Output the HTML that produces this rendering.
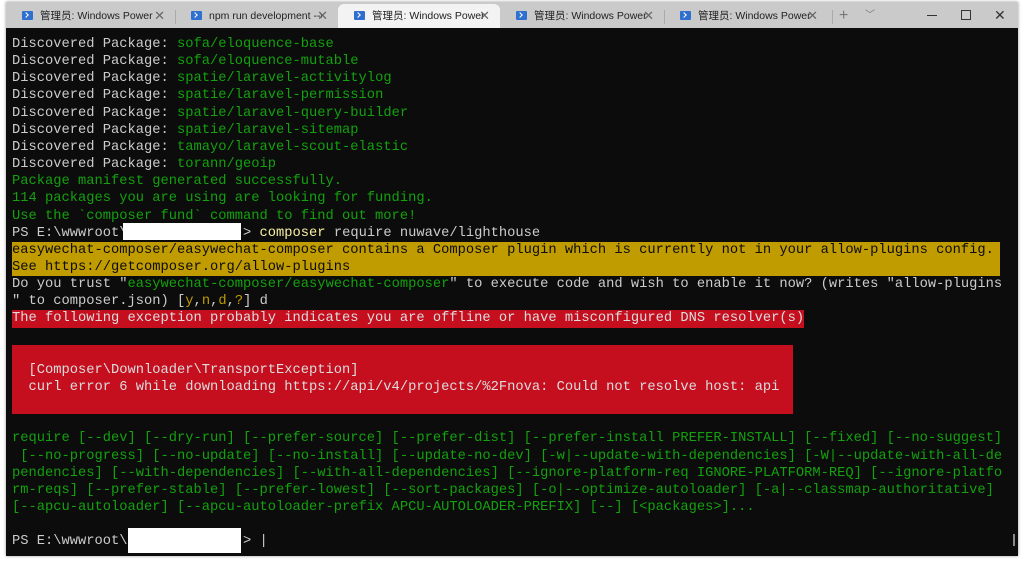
<!DOCTYPE html>
<html><head><meta charset="utf-8"><style>
body{margin:0;width:1024px;height:562px;background:#fff;overflow:hidden;position:relative;font-family:"Liberation Sans","Noto Sans CJK SC",sans-serif}
#win{position:absolute;left:6px;top:2px;width:1012px;height:554px;background:#0c0c0c;box-shadow:0 0 3px rgba(0,0,0,.4)}
#bar{position:absolute;left:0;top:0;width:1012px;height:26px;background:#cacaca}
.tab{position:absolute;top:2px;height:24px;font-size:10.5px;color:#222;line-height:24px}
.tab .ic{position:absolute;left:16px;top:7px;width:11px;height:9px;background:#2f6fcf;border-radius:1px}
.tab .ic:after{content:"";position:absolute;left:2px;top:2px;width:3px;height:3px;border-right:1.3px solid #fff;border-bottom:1.3px solid #fff;transform:rotate(-45deg)}
.tab .t{position:absolute;left:34px;width:113px;overflow:hidden;white-space:nowrap}
.tab .x{position:absolute;right:10px;color:#666;font-size:13px}
.act{background:#f3f3f3;border-radius:6px 6px 0 0}
.sep{position:absolute;top:8px;width:1px;height:14px;background:#aaa}
.term{position:absolute;left:6px;top:34px;font-family:"Liberation Mono",monospace;font-size:13.75px;color:#cccccc;white-space:pre}
.l{position:absolute;left:0;height:17.15px;line-height:17.15px}
.g{color:#13a10e}.y{color:#c19c00}.yl{color:#f9f1a5}
</style></head><body>
<div id="win">
<div id="bar">
 <div class="tab" style="left:0;width:169px"><div class="ic"></div><span class="t">管理员: Windows PowerShell</span><span class="x">✕</span></div>
 <div class="sep" style="left:169px"></div>
 <div class="tab" style="left:169px;width:163px"><div class="ic"></div><span class="t">npm run development --watch</span><span class="x">✕</span></div>
 <div class="tab act" style="left:332px;width:162px"><div class="ic"></div><span class="t">管理员: Windows PowerShell</span><span class="x">✕</span></div>
 <div class="tab" style="left:494px;width:164px"><div class="ic"></div><span class="t">管理员: Windows PowerShell</span><span class="x">✕</span></div>
 <div class="sep" style="left:658px"></div>
 <div class="tab" style="left:658px;width:164px"><div class="ic"></div><span class="t">管理员: Windows PowerShell</span><span class="x">✕</span></div>
 <div class="sep" style="left:826px"></div>
 <div class="tab" style="left:833px;font-size:16px;color:#777">+</div>
 <div class="tab" style="left:859px;font-size:10px;color:#777">﹀</div>
 <div style="position:absolute;left:921px;top:13px;width:10px;height:1px;background:#333"></div>
 <div style="position:absolute;left:955px;top:8px;width:8px;height:8px;border:1px solid #333"></div>
 <div class="tab" style="left:988px;top:1px;font-size:14px;color:#333">✕</div>
</div>
<div class="term">
<div class="l" style="top:0">Discovered Package: <span class="g">sofa/eloquence-base</span></div>
<div class="l" style="top:17.15px">Discovered Package: <span class="g">sofa/eloquence-mutable</span></div>
<div class="l" style="top:34.3px">Discovered Package: <span class="g">spatie/laravel-activitylog</span></div>
<div class="l" style="top:51.45px">Discovered Package: <span class="g">spatie/laravel-permission</span></div>
<div class="l" style="top:68.6px">Discovered Package: <span class="g">spatie/laravel-query-builder</span></div>
<div class="l" style="top:85.75px">Discovered Package: <span class="g">spatie/laravel-sitemap</span></div>
<div class="l" style="top:102.9px">Discovered Package: <span class="g">tamayo/laravel-scout-elastic</span></div>
<div class="l" style="top:120.05px">Discovered Package: <span class="g">torann/geoip</span></div>
<div class="l g" style="top:137.2px">Package manifest generated successfully.</div>
<div class="l g" style="top:154.35px">114 packages you are using are looking for funding.</div>
<div class="l g" style="top:171.5px">Use the `composer fund` command to find out more!</div>
<div class="l" style="top:188.65px">PS E:\wwwroot\              &gt; <span class="yl">composer</span> require nuwave/lighthouse</div>
<div class="l" style="top:205.8px;background:#c19c00;color:#0c0c0c;width:988px">easywechat-composer/easywechat-composer contains a Composer plugin which is currently not in your allow-plugins config.</div>
<div class="l" style="top:222.95px;background:#c19c00;color:#0c0c0c;width:988px">See https://getcomposer.org/allow-plugins</div>
<div class="l" style="top:240.1px">Do you trust "<span class="g">easywechat-composer/easywechat-composer</span>" to execute code and wish to enable it now? (writes "allow-plugins</div>
<div class="l" style="top:257.25px">" to composer.json) [<span class="y">y</span>,<span class="y">n</span>,<span class="y">d</span>,<span class="y">?</span>] d</div>
<div class="l" style="top:274.4px;background:#c50f1f;color:#ddd">The following exception probably indicates you are offline or have misconfigured DNS resolver(s)</div>
<div style="position:absolute;left:0;top:309px;width:781px;height:68.6px;background:#c50f1f"></div>
<div class="l" style="top:325.85px;color:#ddd">  [Composer\Downloader\TransportException]</div>
<div class="l" style="top:343px;color:#ddd">  curl error 6 while downloading https://api/v4/projects/%2Fnova: Could not resolve host: api</div>
<div class="l g" style="top:394.45px">require [--dev] [--dry-run] [--prefer-source] [--prefer-dist] [--prefer-install PREFER-INSTALL] [--fixed] [--no-suggest]</div>
<div class="l g" style="top:411.6px"> [--no-progress] [--no-update] [--no-install] [--update-no-dev] [-w|--update-with-dependencies] [-W|--update-with-all-de</div>
<div class="l g" style="top:428.75px">pendencies] [--with-dependencies] [--with-all-dependencies] [--ignore-platform-req IGNORE-PLATFORM-REQ] [--ignore-platfo</div>
<div class="l g" style="top:445.9px">rm-reqs] [--prefer-stable] [--prefer-lowest] [--sort-packages] [-o|--optimize-autoloader] [-a|--classmap-authoritative]</div>
<div class="l g" style="top:463.05px">[--apcu-autoloader] [--apcu-autoloader-prefix APCU-AUTOLOADER-PREFIX] [--] [&lt;packages&gt;]...</div>
<div class="l" style="top:497.35px">PS E:\wwwroot\              &gt; |</div>
</div>
<div style="position:absolute;left:117px;top:221px;width:118px;height:17px;background:#fff"></div>
<div style="position:absolute;left:122px;top:526px;width:113px;height:25px;background:#fff"></div>
<div style="position:absolute;left:1007px;top:532px;width:2px;height:12px;background:#888"></div>
</div>
</body></html>
